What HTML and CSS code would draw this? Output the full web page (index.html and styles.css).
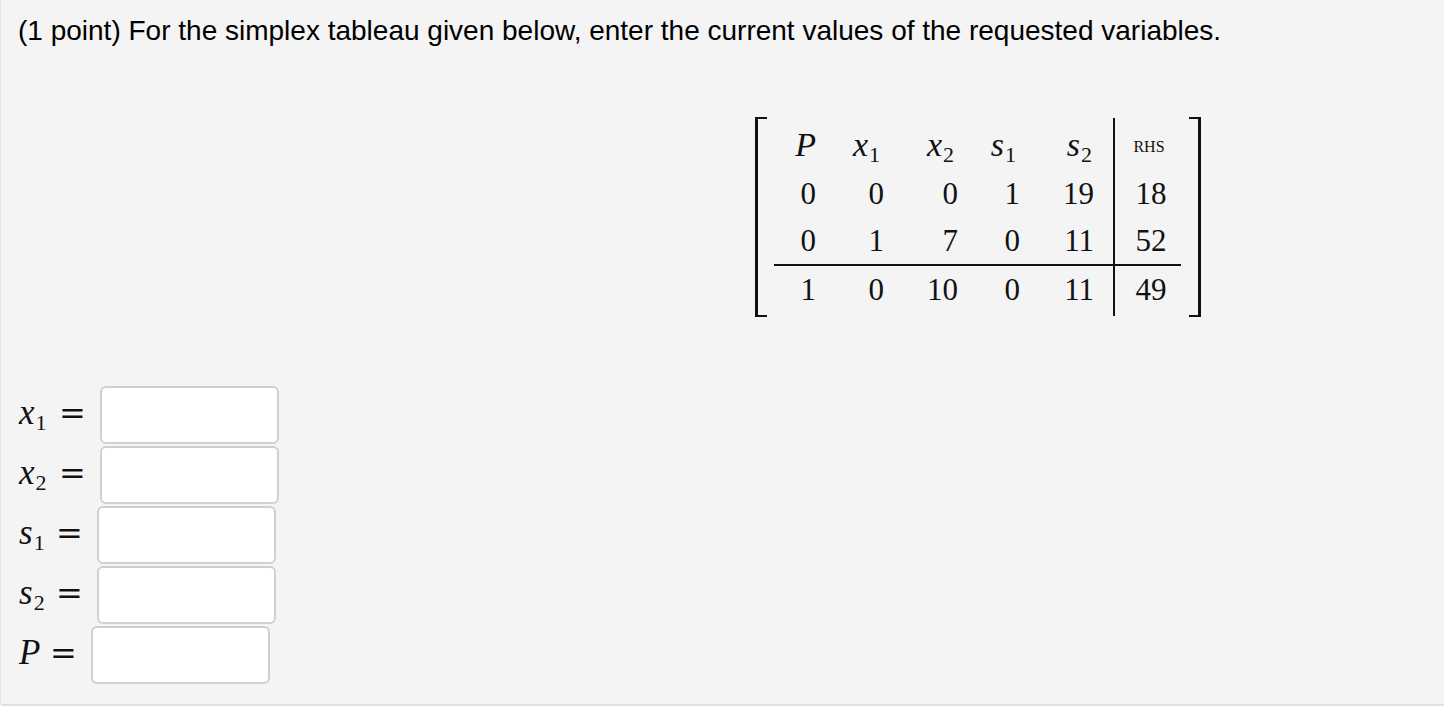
FILE: index.html
```html
<!DOCTYPE html>
<html>
<head>
<meta charset="utf-8">
<link rel="stylesheet" href="styles.css">
</head>
<body>
<div class="card">
  <p class="title">(1 point) For the simplex tableau given below, enter the current values of the requested variables.</p>

  <div class="tableau">
    <div class="bracket left"></div>
    <div class="grid">
      <div class="c h"><i>P</i></div>
      <div class="c h"><i>x</i><sub>1</sub></div>
      <div class="c h"><i>x</i><sub>2</sub></div>
      <div class="c h"><i>s</i><sub>1</sub></div>
      <div class="c h last"><i>s</i><sub>2</sub></div>
      <div class="c h rhs"><span class="rhs-label">RHS</span></div>

      <div class="c">0</div>
      <div class="c">0</div>
      <div class="c">0</div>
      <div class="c">1</div>
      <div class="c last">19</div>
      <div class="c rhs">18</div>

      <div class="c">0</div>
      <div class="c">1</div>
      <div class="c">7</div>
      <div class="c">0</div>
      <div class="c last">11</div>
      <div class="c rhs">52</div>

      <div class="c b">1</div>
      <div class="c b">0</div>
      <div class="c b">10</div>
      <div class="c b">0</div>
      <div class="c b last">11</div>
      <div class="c b rhs">49</div>
    </div>
    <div class="bracket right"></div>
  </div>

  <div class="answers">
    <div class="row">
      <span class="lbl w-x"><i>x</i><sub>1</sub></span><span class="eq">=</span>
      <input class="box" type="text">
    </div>
    <div class="row">
      <span class="lbl w-x"><i>x</i><sub>2</sub></span><span class="eq">=</span>
      <input class="box" type="text">
    </div>
    <div class="row">
      <span class="lbl w-s"><i>s</i><sub>1</sub></span><span class="eq">=</span>
      <input class="box" type="text">
    </div>
    <div class="row">
      <span class="lbl w-s"><i>s</i><sub>2</sub></span><span class="eq">=</span>
      <input class="box" type="text">
    </div>
    <div class="row">
      <span class="lbl w-p"><i>P</i></span><span class="eq">=</span>
      <input class="box" type="text">
    </div>
  </div>
</div>
</body>
</html>
```

FILE: styles.css
```css
html, body {
  margin: 0;
  padding: 0;
  background: #ffffff;
}

body {
  overflow: hidden;
  height: 712px;
}

.card {
  box-sizing: border-box;
  width: 1460px;
  height: 710px;
  margin-top: -4px;
  background: #f4f4f4;
  border: 1px solid #e3e3e3;
  border-bottom: 2px solid #e0e0e0;
  border-radius: 4px;
  padding: 18px 0 0 17px;
}

.title {
  margin: 0;
  font-family: "Liberation Sans", Arial, sans-serif;
  font-size: 28px;
  line-height: 32px;
  color: #000;
}

/* ---------- tableau ---------- */
.tableau {
  display: flex;
  align-items: stretch;
  margin: 70px 0 0 737px;
  height: 200px;
  font-family: "Liberation Serif", "Times New Roman", serif;
  color: #111;
}

.bracket {
  box-sizing: border-box;
  width: 12px;
  border-top: 2px solid #111;
  border-bottom: 2px solid #111;
}

.bracket.left {
  border-left: 3px solid #111;
  margin-right: 7px;
}

.bracket.right {
  border-right: 3px solid #111;
  margin-left: 8px;
}

.grid {
  display: grid;
  grid-template-columns: 42px 68px 74px 62px 93px 68px;
  grid-template-rows: 52px 47px 47px 52px;
  font-size: 31px;
  margin-top: 1px;
}

.c {
  text-align: right;
  line-height: 47px;
  white-space: nowrap;
}

.c.h {
  line-height: 46px;
  padding-top: 4px;
  padding-right: 4px;
}

.c.h i {
  font-size: 34px;
}

.c.h:first-child {
  padding-right: 0;
}

.c.last {
  padding-right: 19px;
}

.c.h.last {
  padding-right: 21px;
}

.c.rhs {
  text-align: center;
  padding-left: 6px;
  border-left: 2px solid #111;
}

.c.b {
  border-top: 2px solid #111;
  line-height: 48px;
}

.rhs-label {
  font-size: 16px;
  position: relative;
  top: -3px;
}

.tableau i {
  font-style: italic;
}

.tableau sub {
  font-size: 22px;
  vertical-align: -6px;
  line-height: 0;
  margin-left: 1px;
}

/* ---------- answers ---------- */
.answers {
  margin-top: 69px;
  font-family: "Liberation Serif", "Times New Roman", serif;
  color: #111;
}

.row {
  display: flex;
  align-items: center;
  height: 58px;
  margin-bottom: 2px;
}

.lbl {
  display: inline-block;
  font-size: 35px;
  line-height: 40px;
  margin-left: 1px;
  padding-bottom: 4px;
}

.lbl i {
  font-style: italic;
}

.lbl sub {
  font-size: 22px;
  vertical-align: -6px;
  line-height: 0;
  margin-left: 1px;
}

.w-x { width: 40px; }
.w-s { width: 37px; }
.w-p { width: 31px; }

.eq {
  font-family: "DejaVu Serif", serif;
  font-size: 32px;
  line-height: 40px;
  padding-bottom: 4px;
  margin-right: 14px;
}

.box {
  box-sizing: border-box;
  flex: none;
  width: 179px;
  height: 58px;
  border: 2px solid #d0d0d0;
  border-radius: 6px;
  background: #ffffff;
  padding: 0 8px;
  font-size: 18px;
  outline: none;
}
```
